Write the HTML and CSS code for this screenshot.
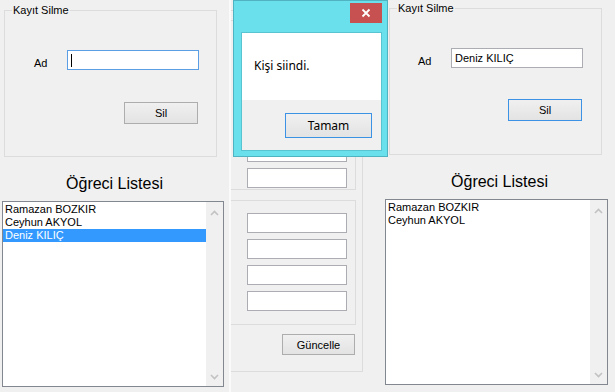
FILE: index.html
```html
<!DOCTYPE html>
<html lang="tr">
<head>
<meta charset="utf-8">
<title>Kayıt Silme</title>
<link rel="stylesheet" href="styles.css">
</head>
<body>
<div class="desk">
  <section class="win win-left">
    <div class="form">
      <fieldset class="grp">
        <legend>Kayıt Silme</legend>
        <div class="row">
          <span class="lbl">Ad</span>
          <div class="tb tb-name tb-focus"><span class="caret"></span></div>
        </div>
        <div class="row-btn"><button class="btn btn-sil">Sil</button></div>
      </fieldset>
      <h2 class="title">Öğreci Listesi</h2>
      <div class="listbox">
        <ul class="items">
          <li>Ramazan BOZKIR</li>
          <li>Ceyhun AKYOL</li>
          <li class="sel">Deniz KILIÇ</li>
        </ul>
        <div class="vscroll">
          <svg class="chev" width="9" height="6" viewBox="0 0 9 6"><polyline points="1,5 4.5,1.5 8,5"/></svg>
          <svg class="chev" width="9" height="6" viewBox="0 0 9 6"><polyline points="1,1 4.5,4.5 8,1"/></svg>
        </div>
      </div>
    </div>
  </section>

  <section class="win win-mid">
    <div class="mid-outer">
      <div class="mid-grp mid-grp1">
        <div class="tb tb-small"></div>
        <div class="tb tb-small"></div>
      </div>
      <div class="mid-grp mid-grp2">
        <div class="tb tb-small"></div>
        <div class="tb tb-small"></div>
        <div class="tb tb-small"></div>
        <div class="tb tb-small"></div>
      </div>
      <button class="btn btn-upd">Güncelle</button>
    </div>
  </section>

  <section class="win win-right">
    <div class="form">
      <fieldset class="grp">
        <legend>Kayıt Silme</legend>
        <div class="row">
          <span class="lbl">Ad</span>
          <div class="tb tb-name"><span class="tb-text">Deniz KILIÇ</span></div>
        </div>
        <div class="row-btn"><button class="btn btn-sil btn-default">Sil</button></div>
      </fieldset>
      <h2 class="title">Öğreci Listesi</h2>
      <div class="listbox">
        <ul class="items">
          <li>Ramazan BOZKIR</li>
          <li>Ceyhun AKYOL</li>
        </ul>
        <div class="vscroll">
          <svg class="chev" width="9" height="6" viewBox="0 0 9 6"><polyline points="1,5 4.5,1.5 8,5"/></svg>
          <svg class="chev" width="9" height="6" viewBox="0 0 9 6"><polyline points="1,1 4.5,4.5 8,1"/></svg>
        </div>
      </div>
    </div>
  </section>

  <div class="dialog">
    <div class="dlg-bar">
      <button class="dlg-close" aria-label="Kapat">
        <svg width="10" height="10" viewBox="0 0 10 10"><path d="M1.5 1.5 L8.5 8.5 M8.5 1.5 L1.5 8.5"/></svg>
      </button>
    </div>
    <div class="dlg-client">
      <div class="dlg-msg">Kişi siindi.</div>
      <div class="dlg-foot"><button class="btn btn-ok">Tamam</button></div>
    </div>
  </div>
</div>
</body>
</html>
```

FILE: styles.css
```css
* { box-sizing: border-box; }
html, body { margin: 0; padding: 0; }
body {
  width: 615px;
  height: 392px;
  overflow: hidden;
  background: #f0f0f0;
  font-family: "Liberation Sans", Arial, sans-serif;
  font-size: 11px;
  color: #000;
}
.desk {
  position: relative;
  display: flex;
  width: 615px;
  height: 392px;
}
.win {
  flex: none;
  height: 392px;
  overflow: hidden;
  background: #f0f0f0;
}
.win-left { width: 231px; border-right: 2px solid #fafafa; }
.win-mid { width: 154px; }
.win-right { width: 230px; }

.form { width: 229px; }
.win-right .form { margin-top: -2px; }

.grp {
  margin: 4px 0 0 4px;
  padding: 0;
  width: 213px;
  height: 153px;
  border: 1px solid #dcdcdc;
  min-inline-size: 0;
}
.grp legend {
  margin-left: 7px;
  padding: 0 1px;
  font-size: 11px;
  line-height: 13px;
}
.row {
  display: flex;
  align-items: flex-start;
  margin-top: 33px;
  padding-left: 29px;
}
.win-right .row { padding-left: 28px; }
.lbl {
  width: 33px;
  margin-top: 7px;
  line-height: 13px;
}
.tb {
  background: #fff;
  border: 1px solid #abadb3;
  height: 20px;
}
.tb-name {
  width: 132px;
  display: flex;
  align-items: center;
  padding-left: 3px;
}
.tb-focus { border-color: #5b9ee3; }
.caret {
  display: block;
  width: 1px;
  height: 13px;
  background: #000;
}
.tb-text { line-height: 13px; }

.btn {
  font-family: "Liberation Sans", Arial, sans-serif;
  font-size: 11px;
  color: #000;
  padding: 0;
  border: 1px solid #adadad;
  background: linear-gradient(#f0f0f0, #e3e3e3);
}
.row-btn { margin-top: 32px; padding-left: 119px; }
.win-right .row-btn { padding-left: 118px; margin-top: 31px; }
.btn-sil { width: 74px; height: 22px; display: block; }
.btn-default { border-color: #3c92e4; }

.title {
  margin: 17px 0 8px;
  font-size: 16px;
  font-weight: normal;
  line-height: 19px;
  text-align: center;
}
.listbox {
  display: flex;
  margin-left: 2px;
  width: 222px;
  height: 186px;
  border: 1px solid #828790;
  background: #fff;
}
.win-right .listbox { margin-left: 0; width: 223px; }
.items {
  flex: 1;
  list-style: none;
  margin: 0;
  padding: 1px 0 0;
}
.items li {
  line-height: 13px;
  padding-left: 2px;
  white-space: nowrap;
}
.items li.sel { background: #3399ff; color: #fff; }
.vscroll {
  width: 17px;
  background: #f0f0f0;
  display: flex;
  flex-direction: column;
  justify-content: space-between;
  align-items: center;
  padding: 8px 0 6px;
}
.chev polyline {
  fill: none;
  stroke: #c2c2c2;
  stroke-width: 1.6;
}

/* middle background window */
.mid-outer {
  display: flex;
  flex-direction: column;
  margin: 10px 0 0 -10px;
  width: 142px;
  height: 362px;
  border: 1px solid #dcdcdc;
  padding: 9px 6px 0 0;
}
.mid-grp {
  display: flex;
  flex-direction: column;
  gap: 6px;
  border: 1px solid #dcdcdc;
  padding-left: 24px;
}
.mid-grp1 { height: 170px; justify-content: flex-end; padding-bottom: 1px; }
.mid-grp2 { height: 125px; margin-top: 10px; padding-top: 12px; }
.tb-small { width: 100px; height: 20px; flex: none; }
.btn-upd {
  align-self: flex-end;
  margin: 9px 1px 0 0;
  width: 73px;
  height: 21px;
}

/* message box */
.dialog {
  position: absolute;
  left: 233px;
  top: 0;
  width: 155px;
  height: 157px;
  background: #6ae0ec;
  border: 1px solid #4fb3c1;
  display: flex;
  flex-direction: column;
}
.dlg-bar {
  height: 31px;
  display: flex;
  justify-content: flex-end;
  align-items: flex-start;
  padding: 2px 5px 0 0;
}
.dlg-close {
  width: 32px;
  height: 20px;
  padding: 0;
  border: 0;
  background: #c75050;
  display: flex;
  align-items: center;
  justify-content: center;
}
.dlg-close path { stroke: #fff; stroke-width: 1.8; fill: none; }
.dlg-client {
  flex: 1;
  margin: 0 5px 5px 7px;
  border: 1px solid #58c4d2;
  display: flex;
  flex-direction: column;
}
.dlg-msg {
  height: 67px;
  background: #fff;
  padding: 25px 0 0 12px;
  font-family: "Noto Sans", "Liberation Sans", sans-serif;
  font-size: 12px;
  line-height: 16px;
}
.dlg-foot {
  flex: 1;
  background: #f0f0f0;
  display: flex;
  justify-content: flex-end;
  align-items: flex-start;
  padding: 13px 9px 0 0;
}
.btn-ok {
  width: 87px;
  height: 25px;
  border-color: #3c92e4;
  font-family: "Noto Sans", "Liberation Sans", sans-serif;
  font-size: 12px;
}
```
